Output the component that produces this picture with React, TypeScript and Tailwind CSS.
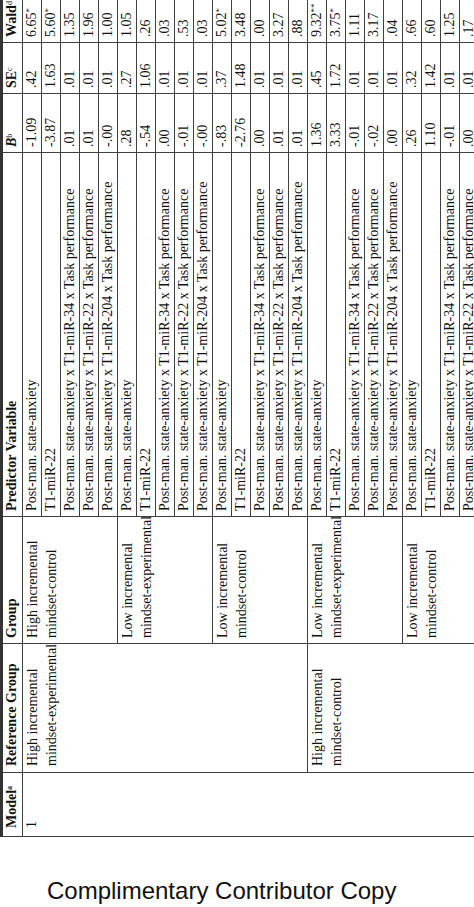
import React from 'react'

const serif = { fontFamily: '"Liberation Serif", "Times New Roman", serif' }

const bVals = ['-1.09', '-3.87', '.01', '.01', '-.00', '.28', '-.54', '.00', '-.01', '-.00', '-.83', '-2.76', '.00', '.01', '.01', '1.36', '3.33', '-.01', '-.02', '.00', '.26', '1.10', '-.01', '.00']
const seVals = ['.42', '1.63', '.01', '.01', '.01', '.27', '1.06', '.01', '.01', '.01', '.37', '1.48', '.01', '.01', '.01', '.45', '1.72', '.01', '.01', '.01', '.32', '1.42', '.01', '.01']
const waldVals: [string, string][] = [
  ['6.65', '*'], ['5.60', '*'], ['1.35', ''], ['1.96', ''], ['1.00', ''],
  ['1.05', ''], ['.26', ''], ['.03', ''], ['.53', ''], ['.03', ''],
  ['5.02', '*'], ['3.48', ''], ['.00', ''], ['3.27', ''], ['.88', ''],
  ['9.32', '**'], ['3.75', '*'], ['1.11', ''], ['3.17', ''], ['.04', ''],
  ['.66', ''], ['.60', ''], ['1.25', ''], ['.17', ''],
]

const predictors = [
  'Post-man. state-anxiety',
  'T1-miR-22',
  'Post-man. state-anxiety x T1-miR-34 x Task performance',
  'Post-man. state-anxiety x T1-miR-22 x Task performance',
  'Post-man. state-anxiety x T1-miR-204 x Task performance',
]

// group cells start at these rows
const groups: Record<number, { lines: string[]; span: number }> = {
  0: { lines: ['High incremental', 'mindset-control'], span: 5 },
  5: { lines: ['Low incremental', 'mindset-experimental'], span: 5 },
  10: { lines: ['Low incremental', 'mindset-control'], span: 5 },
  15: { lines: ['Low incremental', 'mindset-experimental'], span: 5 },
  20: { lines: ['Low incremental', 'mindset-control'], span: 4 },
}

const refGroups: Record<number, { lines: string[]; span: number }> = {
  0: { lines: ['High incremental', 'mindset-experimental'], span: 15 },
  15: { lines: ['High incremental', 'mindset-control'], span: 9 },
}

const cell = 'border border-solid border-[#404040] align-top pl-[5px] pr-0 whitespace-nowrap text-left'
const head = `${cell} border-t-[3px] border-t-[#333] font-bold`

function StatsTable() {
  return (
    <table className="w-[839px] border-collapse table-fixed text-[14px] leading-[18px] text-[#111]" style={serif}>
      <colgroup>
        <col className="w-[64px]" />
        <col className="w-[129px]" />
        <col className="w-[127px]" />
        <col className="w-[364px]" />
        <col className="w-[59px]" />
        <col className="w-[51px]" />
        <col className="w-[45px]" />
      </colgroup>
      <thead>
        <tr className="h-[21px]">
          <th className={`${head} pl-[8px]`}>
            Model<sup className="text-[8px] font-bold">a</sup>
          </th>
          <th className={`${head} pl-[6px]`}>Reference Group</th>
          <th className={`${head} pl-[4px]`}>Group</th>
          <th className={head}>Predictor Variable</th>
          <th className={head}>
            <i>B</i>
            <sup className="text-[8px] font-normal">b</sup>
          </th>
          <th className={head}>
            SE<sup className="text-[8px] font-normal">c</sup>
          </th>
          <th className={head}>
            Wald<sup className="text-[8px] font-normal">d</sup>
          </th>
        </tr>
      </thead>
      <tbody>
        {bVals.map((b, i) => (
          <tr key={i} className="h-[19px]">
            {i === 0 && (
              <td rowSpan={24} className={`${cell} pl-[8px]`}>
                1
              </td>
            )}
            {refGroups[i] && (
              <td rowSpan={refGroups[i].span} className={`${cell} pl-[6px] leading-[19px]`}>
                {refGroups[i].lines.map((l) => (
                  <div key={l}>{l}</div>
                ))}
              </td>
            )}
            {groups[i] && (
              <td rowSpan={groups[i].span} className={`${cell} pl-[4px] leading-[19px]`}>
                {groups[i].lines.map((l) => (
                  <div key={l}>{l}</div>
                ))}
              </td>
            )}
            <td className={cell}>{predictors[i % 5]}</td>
            <td className={cell}>{b}</td>
            <td className={cell}>{seVals[i]}</td>
            <td className={cell}>
              {waldVals[i][0]}
              {waldVals[i][1] && <sup className="text-[9px]">{waldVals[i][1]}</sup>}
            </td>
          </tr>
        ))}
      </tbody>
    </table>
  )
}

export default function App() {
  return (
    <div className="w-[474px] h-[907px] bg-white flex flex-col overflow-hidden">
      {/* rotated table, page is printed landscape */}
      <div className="h-[879px] shrink-0 overflow-hidden">
        <div className="w-[839px] origin-top-left -rotate-90 translate-y-[837px]">
          <StatsTable />
        </div>
      </div>
      <p
        className="pl-[47px] text-[24px] leading-none text-[#111]"
        style={{ fontFamily: '"Liberation Sans", Arial, sans-serif' }}
      >
        Complimentary Contributor Copy
      </p>
    </div>
  )
}
